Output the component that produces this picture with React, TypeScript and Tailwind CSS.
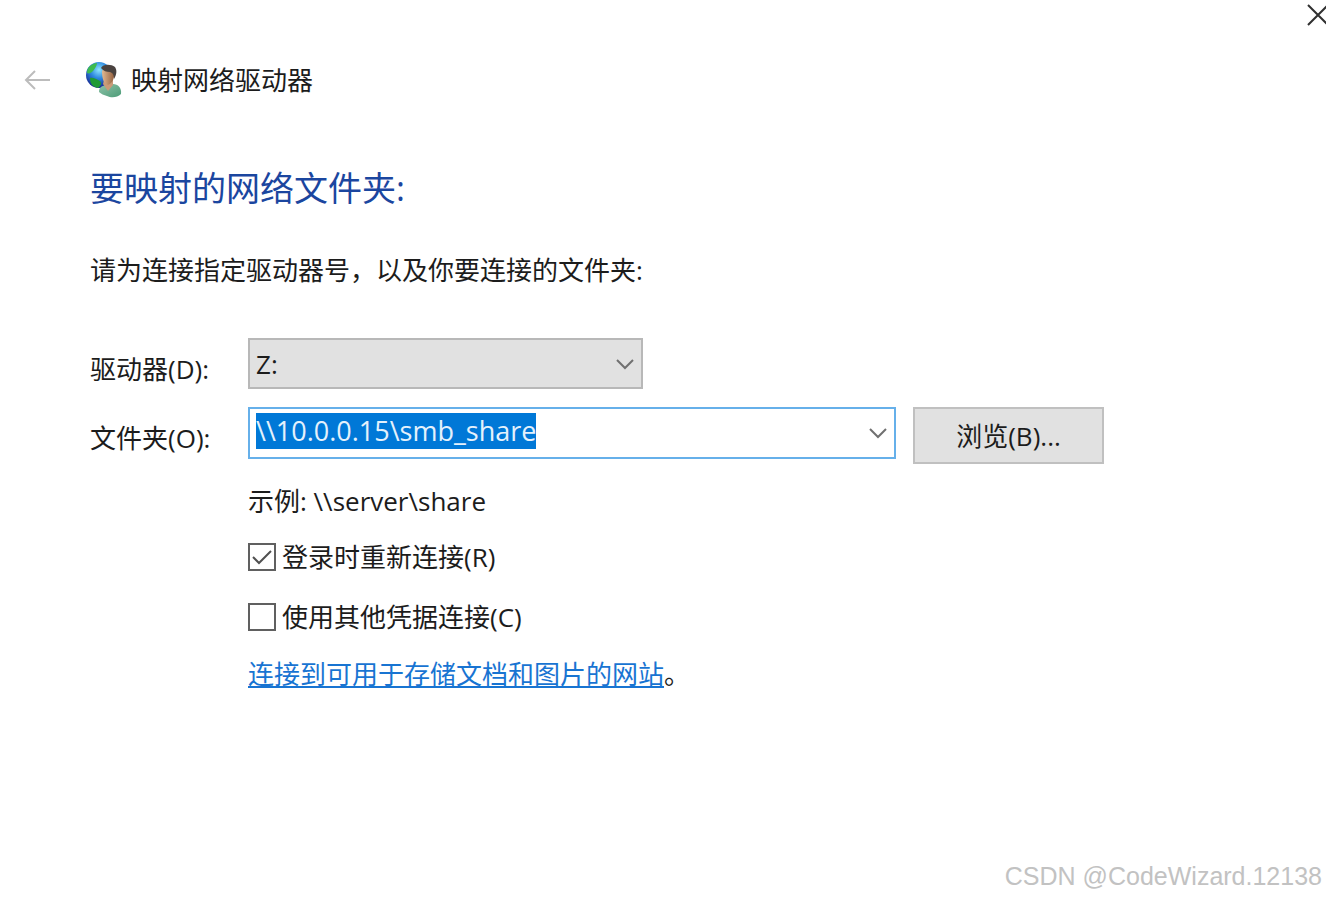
import { useEffect, useRef, useState } from "react";

const DRIVES = ["Z:", "Y:", "X:", "W:", "V:"];

function Chevron() {
  return (
    <svg width="18" height="12" viewBox="0 0 18 12" fill="none" stroke="#707070" strokeWidth="2">
      <path d="M1 2 L9 10 L17 2" />
    </svg>
  );
}

/* Globe with a user in front of it */
function NetworkUserIcon() {
  return (
    <svg width="36" height="36" viewBox="0 0 36 36">
      <defs>
        <radialGradient id="globe" cx="0.5" cy="0.3" r="0.7">
          <stop offset="0" stopColor="#8fe6ff" />
          <stop offset="0.45" stopColor="#2f8be0" />
          <stop offset="1" stopColor="#15238f" />
        </radialGradient>
        <linearGradient id="face" x1="0" y1="0" x2="1" y2="0">
          <stop offset="0" stopColor="#e0b890" />
          <stop offset="1" stopColor="#94603f" />
        </linearGradient>
        <linearGradient id="shirt" x1="0" y1="0" x2="1" y2="1">
          <stop offset="0" stopColor="#8fc2a8" />
          <stop offset="1" stopColor="#4c9c78" />
        </linearGradient>
      </defs>
      <circle cx="13" cy="13" r="13" fill="url(#globe)" />
      <path d="M3 5 C6 2 9 1 11 1 C11 4 9 6 7 9 C5 11 3 12 1 11 C1 8 2 6 3 5Z" fill="#3dbb4e" />
      <path d="M4 16 C7 15 10 17 14 19 C16 21 15 24 12 26 C7 25 4 22 4 16Z" fill="#1f9a35" />
      <path d="M13 30 C13 26 15 24 20 23 L27 22 C32 22 36 26 35 32 C31 36 25 36 21 34 C18 33 15 32 13 30Z" fill="url(#shirt)" />
      <path d="M17 22 L22 29 L27 23 L27 17 L18 18Z" fill="#c99a78" />
      <path d="M16 9 C18 5 26 5 28 9 C29 15 27 21 22 23 C18 22 16 17 16 9Z" fill="url(#face)" />
      <path d="M15 6 C17 2 25 2 29 5 C31 8 31 12 28 17 C28 13 27 11 24 10 C20 10 18 9 15 6Z" fill="#4a4340" />
    </svg>
  );
}

interface CheckRowProps {
  id: string;
  label: string;
  checked: boolean;
  onChange: (checked: boolean) => void;
}

function CheckRow({ id, label, checked, onChange }: CheckRowProps) {
  return (
    <div className="flex items-center gap-[6px]">
      <span className="grid shrink-0">
        <input
          id={id}
          type="checkbox"
          checked={checked}
          onChange={(e) => onChange(e.target.checked)}
          className="col-start-1 row-start-1 size-7 appearance-none border-2 border-[#606060] bg-white"
        />
        {checked && (
          <svg
            className="pointer-events-none col-start-1 row-start-1 size-7"
            viewBox="0 0 28 28"
            fill="none"
            stroke="#505050"
            strokeWidth="2"
          >
            <path d="M5 14 L11 20 L23 8" />
          </svg>
        )}
      </span>
      <label htmlFor={id}>{label}</label>
    </div>
  );
}

export default function App() {
  const [drive, setDrive] = useState("Z:");
  const [folder, setFolder] = useState("\\\\10.0.0.15\\smb_share");
  const [reconnect, setReconnect] = useState(true);
  const [otherCreds, setOtherCreds] = useState(false);
  const folderRef = useRef<HTMLInputElement>(null);

  // Folder path starts out focused and selected
  useEffect(() => {
    folderRef.current?.focus();
    folderRef.current?.select();
  }, []);

  return (
    <div className="flex min-h-screen flex-col overflow-hidden bg-white font-['Open_Sans','Noto_Sans_CJK_SC',sans-serif] text-[26px] leading-9 text-[#1c1c1c]">
      <div className="flex h-[30px] justify-end">
        <button type="button" aria-label="关闭" className="flex items-center">
          <svg width="19" height="22" viewBox="0 0 19 22" fill="none" stroke="#303030" strokeWidth="2">
            <path d="M1 1 L21 21 M21 1 L1 21" />
          </svg>
        </button>
      </div>

      <header className="flex items-center pt-8 pl-6">
        <button type="button" aria-label="返回">
          <svg width="26" height="20" viewBox="0 0 26 20" fill="none" stroke="#bcbcbc" strokeWidth="2">
            <path d="M26 10 H2 M11 1 L2 10 L11 19" />
          </svg>
        </button>
        <span className="ml-9">
          <NetworkUserIcon />
        </span>
        <span className="ml-[9px]">映射网络驱动器</span>
      </header>

      <main className="max-w-[1104px] pt-[65px] pl-[90px]">
        <h1 className="text-[34px] leading-[50px] text-[#1b469f]">要映射的网络文件夹:</h1>
        <p className="mt-[39px]">请为连接指定驱动器号，以及你要连接的文件夹:</p>

        <div className="mt-[50px] grid grid-cols-[158px_1fr] gap-y-[18px]">
          <label htmlFor="drive" className="pt-[13px]">
            驱动器(D):
          </label>
          <div className="grid w-[395px] max-w-full items-center">
            <select
              id="drive"
              value={drive}
              onChange={(e) => setDrive(e.target.value)}
              className="col-start-1 row-start-1 h-[51px] appearance-none border-2 border-[#b8b8b8] bg-[#e1e1e1] px-[6px]"
            >
              {DRIVES.map((d) => (
                <option key={d}>{d}</option>
              ))}
            </select>
            <span className="pointer-events-none col-start-1 row-start-1 mr-[9px] justify-self-end">
              <Chevron />
            </span>
          </div>

          <label htmlFor="folder" className="pt-[13px]">
            文件夹(O):
          </label>
          <div className="flex items-start gap-[17px]">
            <div className="flex h-[52px] min-w-0 flex-1 items-center border-2 border-[#66b0ea] bg-white pr-[7px] pl-[6px]">
              <input
                id="folder"
                ref={folderRef}
                type="text"
                spellCheck={false}
                value={folder}
                onChange={(e) => setFolder(e.target.value)}
                className="mb-1 h-9 min-w-0 flex-1 text-[27px] outline-none selection:bg-[#0078d7] selection:text-[#e4f1fc]"
              />
              <button type="button" aria-label="显示历史记录">
                <Chevron />
              </button>
            </div>
            <button type="button" className="h-[57px] w-[191px] border-2 border-[#c0c0c0] bg-[#e1e1e1]">
              浏览(B)...
            </button>
          </div>
        </div>

        <div className="mt-[19px] ml-[158px]">
          <p>示例: \\server\share</p>
          <div className="mt-5 flex flex-col gap-6">
            <CheckRow id="reconnect" label="登录时重新连接(R)" checked={reconnect} onChange={setReconnect} />
            <CheckRow id="creds" label="使用其他凭据连接(C)" checked={otherCreds} onChange={setOtherCreds} />
          </div>
          <p className="mt-[21px]">
            <a href="#website" className="text-[#1874d2] underline decoration-2 underline-offset-2">
              连接到可用于存储文档和图片的网站
            </a>
            。
          </p>
        </div>
      </main>

      <footer className="mt-auto pr-1 pb-1 text-right font-['Liberation_Sans',sans-serif] text-[25px] text-[#c2c2c2]">
        CSDN @CodeWizard.12138
      </footer>
    </div>
  );
}
